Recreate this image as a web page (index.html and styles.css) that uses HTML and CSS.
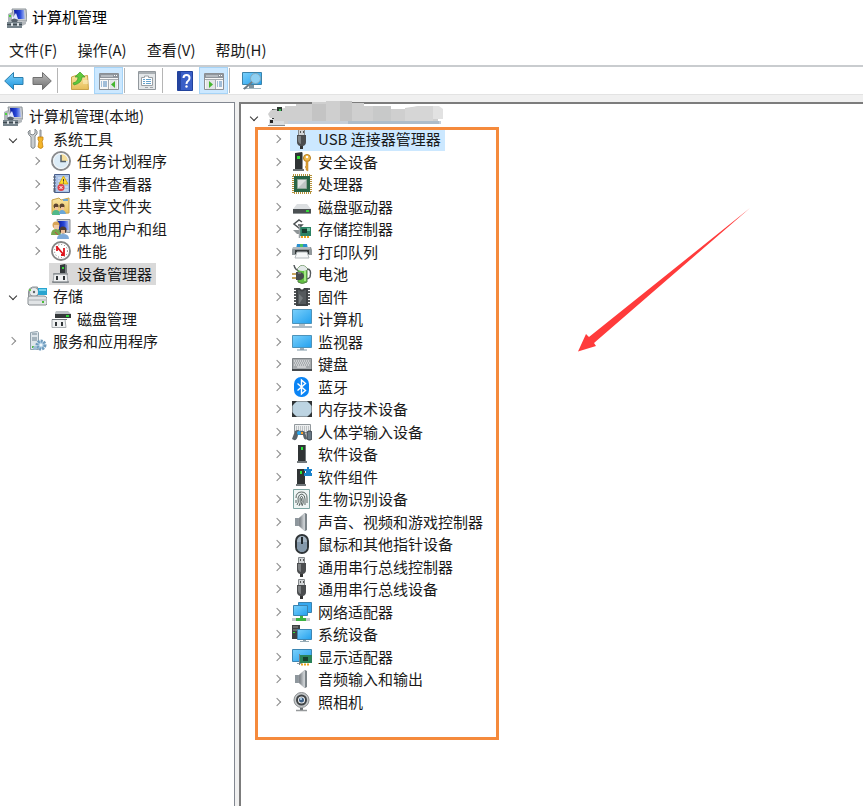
FILE: index.html
```
<!DOCTYPE html>
<html lang="zh-CN">
<head>
    <meta charset="UTF-8">
    <meta name="viewport" content="width=device-width, initial-scale=1">
    <title>计算机管理</title>
    <link rel="stylesheet" href="styles.css">
</head>
<body>
    <!-- Icon sprite, every symbol is drawn on a 20x20 grid -->
    <svg class="sprite" aria-hidden="true">
        <defs>
            <linearGradient id="g-blue" x1="0" y1="0" x2="1" y2="1"><stop offset="0" stop-color="#7ad0fb"/><stop offset="1" stop-color="#22a0ee"/></linearGradient>
            <linearGradient id="g-arrow" x1="0" y1="0" x2="0" y2="1"><stop offset="0" stop-color="#7fd2fa"/><stop offset="1" stop-color="#1a93dd"/></linearGradient>
            <linearGradient id="g-grey" x1="0" y1="0" x2="0" y2="1"><stop offset="0" stop-color="#bdbdbd"/><stop offset="1" stop-color="#707070"/></linearGradient>
            <linearGradient id="g-silver" x1="0" y1="0" x2="1" y2="0"><stop offset="0" stop-color="#70767b"/><stop offset="1" stop-color="#dfe3e6"/></linearGradient>
            <linearGradient id="g-screen" x1="0" y1="0" x2="1" y2="0"><stop offset="0" stop-color="#0a1a9c"/><stop offset=".55" stop-color="#2747d8"/><stop offset="1" stop-color="#a9bcf5"/></linearGradient>
            <linearGradient id="g-folder" x1="0" y1="0" x2="0" y2="1"><stop offset="0" stop-color="#fbe7a4"/><stop offset="1" stop-color="#e6bd58"/></linearGradient>
        </defs>
        <symbol id="i-computer-mgmt" viewBox="0 0 20 20">
            <path d="M5 1h14l1 12H7z" fill="#c9ccd0" stroke="#8d9499"/>
            <path d="M7 2h10l1 9H8z" fill="url(#g-screen)"/>
            <path d="M1 6l4-2v10H1z" fill="#aeb5ba"/><path d="M2 7h2v2H2z" fill="#4bd53b"/>
            <path d="M5 11l4-6 2 6z" fill="#dfe6ff"/>
            <path d="M4 12q3-3 7 0l-1 2H5z" fill="#56606a"/>
            <path d="M0 14h15v6H0z" fill="#76838b"/><path d="M0 16h15v1H0z" fill="#3f4a52"/>
            <path d="M4 15h2v3H4zM10 15h2v3h-2z" fill="#d7dde1"/>
            <path d="M15 14l4-1v3l-4 2z" fill="#b3b8bc"/>
        </symbol>
        <symbol id="i-back" viewBox="0 0 20 20"><path d="M.7 10L9.500 1.500v5H19v7H9.500v5z" fill="url(#g-arrow)" stroke="#2b7fae"/></symbol>
        <symbol id="i-forward" viewBox="0 0 20 20"><path d="M19.300 10L10.500 1.500v5H1v7h9.500v5z" fill="url(#g-grey)" stroke="#707070"/></symbol>
        <symbol id="i-up" viewBox="0 0 20 20">
            <path d="M1.500 6l6-2 1.500 2 8.500-1.500 1 14H1.500z" fill="url(#g-folder)" stroke="#c9a24a"/>
            <path d="M13 10h5M13 12h5" stroke="#fff3c9"/>
            <path d="M3 12Q8 11 8 6H5l5-5 5 5h-3q0 6-8 8z" fill="#5ec93c" stroke="#3d9a28" stroke-width=".7"/>
        </symbol>
        <symbol id="i-tree" viewBox="0 0 20 20">
            <path d="M.5 2.500h19v16H.5z" fill="#f8f8f8" stroke="#8b8f94"/><path d="M1 3h18v4H1z" fill="#8f959c"/>
            <path d="M2 5h12" stroke="#dde1e5"/><path d="M15 4h1v1h-1zM17 4h1v1h-1z" fill="#fff"/>
            <path d="M9.500 8v10M1 8.500h18" stroke="#a6abb0"/>
            <path d="M2 11h1m1 0h4M2 13h1m1 0h4M2 15h1m1 0h4" stroke="#4b83b8"/>
            <path d="M11 9h7v9h-7z" fill="#e3e5e7"/><path d="M12 13.500l4-3.500v7z" fill="#45b62e"/>
        </symbol>
        <symbol id="i-props" viewBox="0 0 20 20">
            <path d="M1.500 .5h17v18h-17z" fill="#e4e7e9" stroke="#92989d"/><path d="M2 1h16v2H2z" fill="#a9afb3"/>
            <path d="M4.500 6.500h3V5h4v1.500h4v8h-11z" fill="#fff" stroke="#9aa0a5"/>
            <path d="M6 8.500h2m1 0h5M6 10.500h2m1 0h5M6 12.500h2m1 0h5" stroke="#65a2cc"/><path d="M8 16.500h3m2 0h3" stroke="#a0a5aa"/>
        </symbol>
        <symbol id="i-help" viewBox="0 0 20 20">
            <path d="M2.500 .5h15v19h-15z" fill="#395fc7" stroke="#21429c"/><path d="M3 1h3v18H3z" fill="#24449f"/>
            <path d="M8.500 7q0-3 3-3t3 3q0 2-1.500 3T11.500 13" fill="none" stroke="#fff" stroke-width="2"/><circle cx="11.500" cy="15.500" r="1.200" fill="#fff"/>
        </symbol>
        <symbol id="i-action" viewBox="0 0 20 20">
            <path d="M.5 2.500h19v16H.5z" fill="#f8f8f8" stroke="#8b8f94"/><path d="M1 3h18v4H1z" fill="#8f959c"/>
            <path d="M2 5h12" stroke="#dde1e5"/><path d="M15 4h1v1h-1zM17 4h1v1h-1z" fill="#fff"/>
            <path d="M2 9h9v9H2z" fill="#e3e5e7"/><path d="M11.500 8v10M1 8.500h18" stroke="#a6abb0"/>
            <path d="M5 10v7l4-3.500z" fill="#45b62e"/>
            <path d="M13 11h1m1 0h3M13 13h1m1 0h3M13 15h1m1 0h3" stroke="#4b83b8"/>
        </symbol>
        <symbol id="i-scan" viewBox="0 0 20 20">
            <path d="M.5 1.500h19v12H.5z" fill="url(#g-blue)" stroke="#3b83aa"/><path d="M7 14h5v3H7z" fill="#7b929e"/><path d="M1 17.500h18" stroke="#a3b7c1"/>
            <circle cx="13.500" cy="7.500" r="5" fill="#8fd0f2" stroke="#86a9bb"/><path d="M10 11l-8 7" stroke="#6c7d87" stroke-width="2"/>
        </symbol>
        <symbol id="i-tools" viewBox="0 0 20 20">
            <path d="M3 1v4l3 1 2-2V0q3 2 2 5L8 7v11q-2 3-4 0V8Q1 6 1 3z" fill="#c9cdd0" stroke="#868c90"/>
            <path d="M13 1h1v7h-1z" stroke="#8b8f92" fill="#dde0e2"/>
            <path d="M11 8h5v3l-1 1 1 6q-2 3-5 0l1-6-1-1z" fill="#f4b52a" stroke="#c4820f" stroke-width=".8"/>
        </symbol>
        <symbol id="i-clock" viewBox="0 0 20 20">
            <circle cx="10" cy="10" r="9" fill="#dcecf7" stroke="#8b8c8e" stroke-width="2"/><path d="M10 10V3a7 7 0 0 1 7 7z" fill="#f6df9d"/>
            <circle cx="10" cy="10" r="7.500" fill="none" stroke="#f7f7f7"/><path d="M10 4v6.500h5" fill="none" stroke="#55626c" stroke-width="1.500"/>
        </symbol>
        <symbol id="i-event" viewBox="0 0 20 20">
            <path d="M3.500 .5h15v18h-15z" fill="#a9c1e6" stroke="#4a5f8c"/><path d="M7 4h10M7 7h10M7 10h10M7 13h10M7 16h10" stroke="#e1ebf8"/>
            <path d="M2 3h3M2 6h3M2 9h3M2 12h3M2 15h3M2 17h3" stroke="#59606b"/>
            <path d="M12.500 2l4.500 8H8z" fill="#ffd92e" stroke="#cda20b" stroke-width=".8"/><path d="M12.500 5v2.500M12.500 8.500v1" stroke="#333"/>
            <circle cx="10" cy="13.500" r="3.500" fill="#e0424a"/><path d="M8.500 12l3 3m0-3l-3 3" stroke="#fff"/>
        </symbol>
        <symbol id="i-share" viewBox="0 0 20 20">
            <path d="M1 4l7-2 2 2 8-2v15l-17 1z" fill="url(#g-folder)" stroke="#c9a24a"/><path d="M12 4h5" stroke="#6fa7cf" stroke-width="2"/>
            <circle cx="5" cy="10" r="2.500" fill="#5b4431"/><circle cx="11" cy="10" r="2.500" fill="#5b4431"/>
            <path d="M4 11h3v3H4zM10 11h3v3h-3z" fill="#f0c29c"/><path d="M1 19q0-5 4-5t4 5z" fill="#51b98a"/><path d="M8 18q0-4 3-4t4 4z" fill="#6aa7d8"/>
        </symbol>
        <symbol id="i-users" viewBox="0 0 20 20">
            <path d="M6 .5h13v13l-11-1z" fill="#c8cbd0" stroke="#8b9095"/><path d="M7 2h10l1 9H8z" fill="url(#g-screen)"/>
            <circle cx="5" cy="6" r="3.500" fill="#d8a557"/><path d="M3 6h5v4H3z" fill="#f0c9a2"/><path d="M0 16q0-6 5-6t5 6z" fill="#76a84f"/>
            <circle cx="12" cy="11" r="3.500" fill="#4d3c30"/><path d="M10 11h4v3h-4z" fill="#eebf98"/><path d="M6 20q0-5 6-5t6 5z" fill="#7eaad9"/><path d="M4 13l3 3" stroke="#c44"/>
        </symbol>
        <symbol id="i-perf" viewBox="0 0 20 20">
            <circle cx="10" cy="10" r="9" fill="#fff" stroke="#858585" stroke-width="1.800"/><circle cx="10" cy="10" r="6.500" fill="none" stroke="#777" stroke-dasharray="1 2"/>
            <path d="M6 6l7 8M6 5v5M13 7v7H10" fill="none" stroke="#e0141c" stroke-width="1.800"/>
        </symbol>
        <symbol id="i-devmgr" viewBox="0 0 20 20">
            <path d="M9 1l5-1v10H9z" fill="#33383b"/><path d="M14 0l2 1v9h-2z" fill="#777d80"/><path d="M11 3h2v2h-2z" fill="#35d43a"/>
            <path d="M3 9.500h13l1 9H2z" fill="#eef0f1" stroke="#a5aaae"/><path d="M2 10h15" stroke="#72797d"/><path d="M5 12h2v4H5zM12 12h2v4h-2z" fill="#2d3235"/><path d="M1 18h17" stroke="#62686c"/>
        </symbol>
        <symbol id="i-storage" viewBox="0 0 20 20">
            <path d="M1.500 6q0-4 4-5h5v10l-9 2z" fill="#c5c9cb" stroke="#8c9296"/><circle cx="7" cy="6" r="4.500" fill="#e8ecee" stroke="#9aa0a4"/><circle cx="7" cy="6" r="1.200" fill="#5d656a"/><path d="M2 3h2v2H2z" fill="#68cc47"/>
            <path d="M11 2h9v7h-9z" fill="#28a4cf"/><path d="M12 3h7v2h-7z" fill="#73d2ee"/>
            <path d="M1 12q0-2 2-2h14q2 0 3 2v6l-1 1H2l-1-1z" fill="#e1e4e6" stroke="#868c90"/><path d="M2 14h17" stroke="#a9aeb2"/><path d="M15 15h2v2h-2z" fill="#49bd38"/>
        </symbol>
        <symbol id="i-diskmgmt" viewBox="0 0 20 20">
            <path d="M5 2h12l3 3v3H4V4z" fill="#bcc1c4"/><path d="M4 5h16v4H4z" fill="#35393b"/><path d="M15 6h3v2h-3z" fill="#2ed43a"/>
            <path d="M1 10.500h13l1 8H1z" fill="#eff1f2" stroke="#a8adb0"/><path d="M1 10h15v1H1z" fill="#70777b"/><path d="M4 13h2v4H4zM10 13h2v4h-2z" fill="#303538"/>
        </symbol>
        <symbol id="i-services" viewBox="0 0 20 20">
            <path d="M3.500 1.500l7-1 1 1v17h-8z" fill="#dde5ea" stroke="#91a2ad"/><path d="M5 3h5M5 7h5M5 9h5" stroke="#6c8290"/><path d="M5 15h2v2H5z" fill="#54bb42"/>
            <circle cx="14" cy="14" r="4" fill="#aecde4" stroke="#6e9bbd" stroke-width="3" stroke-dasharray="2 1"/><circle cx="14" cy="14" r="1.500" fill="#eef6fb"/>
            <circle cx="8" cy="17" r="2" fill="#9bbdd6"/>
        </symbol>
        <symbol id="i-pc" viewBox="0 0 20 20">
            <path d="M4 2h7v11H4z" fill="#34393a"/><path d="M8 3h2v2H8z" fill="#30cc3a"/><path d="M1 12h16v7H1z" fill="#d9dcde"/><path d="M2 13h3v3H2z" fill="#222"/><path d="M0 18.500h17" stroke="#868b8e"/>
        </symbol>
        <symbol id="i-usb" viewBox="0 0 20 20">
            <path d="M6.500 .5h6v6h-6z" fill="#d2d5d7" stroke="#85898c"/><path d="M8 2h1v2H8zM11 2h1v2h-1z" fill="#555"/>
            <path d="M5 6h9v7q0 3-3 4H8q-3-1-3-4z" fill="#4b4d4f"/><path d="M6 7h3v8Q6 14 6 11z" fill="#7d8082"/><path d="M8 17h3v3H8z" fill="#333"/>
        </symbol>
        <symbol id="i-security" viewBox="0 0 20 20">
            <path d="M3 1l7-1v17H3z" fill="#2f3334"/><path d="M10 0l1 1v16h-1z" fill="#8d9293"/><path d="M5 4h3v3H5z" fill="#2fdf33"/><path d="M1 17h11v2H1z" fill="#6f7475"/>
            <circle cx="15" cy="6" r="3.500" fill="#f0b94c" stroke="#b57c1c"/><circle cx="15" cy="5" r="1.200" fill="#fff"/><path d="M14 9h2v10l-2-1v-2l-1-1 1-1z" fill="#dda034" stroke="#b57c1c" stroke-width=".5"/>
        </symbol>
        <symbol id="i-cpu" viewBox="0 0 20 20">
            <path d="M1 1h18v18H1z" fill="none" stroke="#b5913a" stroke-width="2" stroke-dasharray="1 1"/><path d="M2 2h16v16H2z" fill="#286445"/>
            <path d="M5.500 5.500h9v9h-9z" fill="#dfe2e2" stroke="#8fa799"/><path d="M6 14l8-8v8z" fill="#bfc5c5"/>
        </symbol>
        <symbol id="i-disk" viewBox="0 0 20 20">
            <path d="M5 7h10l4 5H1z" fill="#dcdfe1"/><path d="M1 12h18v5H1z" fill="#4b5052"/><path d="M1 16.500h18" stroke="#8e9395"/><path d="M14 13h3v2h-3z" fill="#34db39"/>
        </symbol>
        <symbol id="i-storagectl" viewBox="0 0 20 20">
            <path d="M10 3L7 1 2 5l5 4 3-3H6" fill="none" stroke="#4c5153" stroke-width="1.500"/>
            <path d="M1 11h6v4H5z" fill="#8f9597"/><path d="M7 8h12v9H7z" fill="#2c8365"/><path d="M7.500 7v12" stroke="#9da3a5" stroke-width="1.500"/>
            <path d="M10 10h5v4h-5z" fill="#173d31"/><path d="M15 9h3v3h-3z" fill="#71c6a2"/><path d="M9 18h8" stroke="#e9a521" stroke-width="2" stroke-dasharray="2 1"/>
        </symbol>
        <symbol id="i-printer" viewBox="0 0 20 20">
            <path d="M5 2h10l1 5H4z" fill="#288fce"/><path d="M8 2h3v4H8z" fill="#49c465"/><path d="M1 5h18l1 3v5H0V8z" fill="#91989b"/><path d="M1 6h17" stroke="#d7dcdf"/>
            <path d="M3 8h14v4H3z" fill="#34393b"/><path d="M5 10h10l2 6H3z" fill="#f6f8f9" stroke="#b1b7ba"/>
        </symbol>
        <symbol id="i-battery" viewBox="0 0 20 20">
            <path d="M2 1q1 6 7 6M15 5q5 0 3 8-1 2-4 2" fill="none" stroke="#53595b" stroke-width="1.500"/>
            <path d="M6 4q4-5 9 0v14q-5 3-9 0z" fill="#61bf42" stroke="#56804b"/><path d="M6 4q4-5 9 0v2q-4 2-9 0z" fill="#e2e8e8"/><path d="M13 7v10" stroke="#a3e984" stroke-width="2"/>
            <path d="M4 8h4q4 1 4 4t-4 4H4z" fill="#464b4c"/><path d="M0 10h4M0 14h4" stroke="#b8892b" stroke-width="1.500"/><path d="M6 9h3" stroke="#999"/>
        </symbol>
        <symbol id="i-firmware" viewBox="0 0 20 20">
            <path d="M3.500 1v18M16.500 1v18" stroke="#565a5c" stroke-width="3" stroke-dasharray="2 1"/><path d="M4 1h4q2 3 4 0h4v18H4z" fill="#3e4244"/><path d="M6 3h1q3 3 6 0h1v14H6z" fill="#54595c"/><path d="M7 17V7l4 4z" fill="#747a7c"/>
        </symbol>
        <symbol id="i-computer" viewBox="0 0 20 20">
            <path d="M.5 .5h19v14H.5z" fill="url(#g-blue)" stroke="#4d93ba"/><path d="M7 15h6v2H7z" fill="#b3c0c8"/><path d="M0 18h20" stroke="#91a5b2" stroke-width="1.500"/>
        </symbol>
        <symbol id="i-monitor" viewBox="0 0 20 20">
            <path d="M.5 3.500h19v12H.5z" fill="url(#g-blue)" stroke="#4d93ba"/><path d="M8 16h4v2H8z" fill="#9cadb7"/><path d="M5 18h10" stroke="#8099a8"/>
        </symbol>
        <symbol id="i-keyboard" viewBox="0 0 20 20">
            <path d="M.5 4.500h19v11H.5z" fill="#a7abae" stroke="#7e8386"/><path d="M2 7h16M3 9h15M2 11h16" stroke="#f3f5f6" stroke-dasharray="1 1"/><path d="M5 13h9" stroke="#eee"/><path d="M0 15h20v2H0z" fill="#45494c"/>
        </symbol>
        <symbol id="i-bluetooth" viewBox="0 0 20 20">
            <rect x="2" width="15" height="20" rx="7" fill="#0a84f5"/><path d="M5.500 6.500l8 7-4 3.500V3l4 3.500-8 7" fill="none" stroke="#fff" stroke-width="1.400"/>
        </symbol>
        <symbol id="i-memory" viewBox="0 0 20 20">
            <rect x=".5" y="2.500" width="19" height="15" rx="1" fill="#b9d1df" stroke="#8b969d"/><path d="M0 7V2h5zM15 2h5v5zM0 13v5h5zM15 18h5v-5z" fill="#303436"/><path d="M3 4h14l1 2v8l-1 2H3l-1-2V6z" fill="#bdd4e2"/>
        </symbol>
        <symbol id="i-hid" viewBox="0 0 20 20">
            <path d="M2.500 2.500h16v8h-16z" fill="#eceeef" stroke="#92999d"/><path d="M4 5h13M4 7h13M4 9h13" stroke="#8f9699" stroke-dasharray="1 1"/>
            <path d="M3 9q3-2 5 0 3-1 5 1l2 7q-3 2-4-4H6q-1 6-4 5l-2-1z" fill="#59636a"/><circle cx="7" cy="11" r="2" fill="#2ba6ec"/><path d="M9 11h2" stroke="#ff9f27" stroke-width="2"/>
            <rect x="15" y="9" width="5" height="9" rx="2" fill="#677783" stroke="#394148"/>
        </symbol>
        <symbol id="i-software" viewBox="0 0 20 20">
            <path d="M6 1h8v16H6z" fill="#303435"/><path d="M13 1h1v16h-1z" fill="#70777a"/><path d="M9 3h2v3H9z" fill="#27e53a"/><path d="M5 17h10v2H5z" fill="#72787b"/>
        </symbol>
        <symbol id="i-component" viewBox="0 0 20 20">
            <path d="M5 2h8v16H5z" fill="#303435"/><path d="M8 4h2v3H8z" fill="#27e53a"/><path d="M4 17h10v2H4z" fill="#72787b"/>
            <path d="M12 2h3V0h2v2h3v2h-1v2h1v3h-8V6h2V4h-2z" fill="#1982cb"/>
        </symbol>
        <symbol id="i-bio" viewBox="0 0 20 20">
            <path d="M1.500 .5h16v19h-16z" fill="#eef5f4" stroke="#7da5a2"/>
            <g fill="none" stroke="#596361"><path d="M4 9q0-6 5.500-6T15 9v5M5 16q2-2 1-7 1-4 4-4 3 1 3 5v6M7 17q2-3 1-8 2-4 3 1 1 4-1 7M9 9q2 4 0 7M4 11v3"/></g>
        </symbol>
        <symbol id="i-speaker" viewBox="0 0 20 20">
            <path d="M3 6h4v8H3z" fill="#8e979d"/><path d="M7 6l6-5v18l-6-5z" fill="url(#g-silver)" stroke="#a5aaae" stroke-width=".5"/><path d="M13 1l2 1v16l-2 1z" fill="#7b8388"/>
        </symbol>
        <symbol id="i-mouse" viewBox="0 0 20 20">
            <rect x="4" y="1" width="12" height="18" rx="6" fill="#a4b4c2" stroke="#303538" stroke-width="2"/><path d="M5 8v5q1 5 5 5t5-5V8z" fill="#8498aa"/><path d="M10 3v7" stroke="#22282c" stroke-width="2"/>
        </symbol>
        <symbol id="i-network" viewBox="0 0 20 20">
            <path d="M6.500 .5h13v10h-13z" fill="#35a8f0" stroke="#3a83b0"/><path d="M1.500 3.500h14v10h-14z" fill="url(#g-blue)" stroke="#3a83b0"/>
            <path d="M8 14h3v2H8z" fill="#46b33d"/><path d="M0 17.500h18" stroke="#c5cacc" stroke-width="3"/><path d="M4 17.500h10" stroke="#3cb343" stroke-width="3"/>
        </symbol>
        <symbol id="i-system" viewBox="0 0 20 20">
            <path d="M0 1h8v14H0z" fill="#3e4244"/><path d="M1 3h5M1 6h5" stroke="#999"/><path d="M1 8h2v1H1z" fill="#31df3b"/>
            <path d="M5.500 5.500h14v10h-14z" fill="url(#g-blue)" stroke="#3d86b3"/><path d="M11 16h3v1h-3z" fill="#8ba0ac"/><path d="M8 17.500h9" stroke="#98abb5"/>
        </symbol>
        <symbol id="i-display" viewBox="0 0 20 20">
            <path d="M.5 2.500h19v12H.5z" fill="url(#g-blue)" stroke="#3d86b3"/><path d="M5 16.500h5" stroke="#8ba0ac"/><path d="M7.500 7v11" stroke="#7b8183"/>
            <path d="M8 8h12v8H8z" fill="#2b8358"/><path d="M11 10h5v4h-5z" fill="#163f2d"/><path d="M9 17.500h8" stroke="#e9a521" stroke-width="2" stroke-dasharray="2 1"/>
        </symbol>
        <symbol id="i-camera" viewBox="0 0 20 20">
            <circle cx="9.500" cy="8" r="7.500" fill="#c5c8ca" stroke="#8a8e90"/><circle cx="9.500" cy="8" r="4.500" fill="#f0f2f3" stroke="#3f4345" stroke-width="2"/><circle cx="9.500" cy="8" r="2.500" fill="#3c5f85"/><circle cx="9" cy="7" r="1" fill="#c6e3fa"/>
            <path d="M8 16h3v2H8z" fill="#686d70"/><path d="M4 18.500h11" stroke="#96999b" stroke-width="1.500"/>
        </symbol>
    </svg>

    <header class="title-bar">
        <svg class="icon"><use href="#i-computer-mgmt"/></svg>
        <span>计算机管理</span>
    </header>

    <nav class="menu">
        <button>文件(F)</button>
        <button>操作(A)</button>
        <button>查看(V)</button>
        <button>帮助(H)</button>
    </nav>

    <div class="toolbar">
        <button aria-label="后退"><svg class="icon"><use href="#i-back"/></svg></button>
        <button aria-label="前进"><svg class="icon"><use href="#i-forward"/></svg></button>
        <span class="separator"></span>
        <button aria-label="上移"><svg class="icon"><use href="#i-up"/></svg></button>
        <button class="active" aria-label="显示/隐藏控制台树"><svg class="icon"><use href="#i-tree"/></svg></button>
        <span class="separator"></span>
        <button aria-label="属性"><svg class="icon"><use href="#i-props"/></svg></button>
        <span class="separator"></span>
        <button aria-label="帮助"><svg class="icon"><use href="#i-help"/></svg></button>
        <button class="active" aria-label="显示/隐藏操作窗格"><svg class="icon"><use href="#i-action"/></svg></button>
        <span class="separator"></span>
        <button aria-label="扫描检测硬件改动"><svg class="icon"><use href="#i-scan"/></svg></button>
    </div>

    <main class="panes">
        <aside class="console-pane">
            <div class="row"><span class="node"><svg class="icon"><use href="#i-computer-mgmt"/></svg>计算机管理(本地)</span></div>
            <ul class="tree">
                <li>
                    <div class="row"><button class="expander open" aria-label="折叠"></button><span class="node"><svg class="icon"><use href="#i-tools"/></svg>系统工具</span></div>
                    <ul class="tree nested">
                        <li class="row"><button class="expander" aria-label="展开"></button><span class="node"><svg class="icon"><use href="#i-clock"/></svg>任务计划程序</span></li>
                        <li class="row"><button class="expander" aria-label="展开"></button><span class="node"><svg class="icon"><use href="#i-event"/></svg>事件查看器</span></li>
                        <li class="row"><button class="expander" aria-label="展开"></button><span class="node"><svg class="icon"><use href="#i-share"/></svg>共享文件夹</span></li>
                        <li class="row"><button class="expander" aria-label="展开"></button><span class="node"><svg class="icon"><use href="#i-users"/></svg>本地用户和组</span></li>
                        <li class="row"><button class="expander" aria-label="展开"></button><span class="node"><svg class="icon"><use href="#i-perf"/></svg>性能</span></li>
                        <li class="row leaf"><span class="node current"><svg class="icon"><use href="#i-devmgr"/></svg>设备管理器</span></li>
                    </ul>
                </li>
                <li>
                    <div class="row"><button class="expander open" aria-label="折叠"></button><span class="node"><svg class="icon"><use href="#i-storage"/></svg>存储</span></div>
                    <ul class="tree nested">
                        <li class="row leaf"><span class="node"><svg class="icon"><use href="#i-diskmgmt"/></svg>磁盘管理</span></li>
                    </ul>
                </li>
                <li class="row"><button class="expander" aria-label="展开"></button><span class="node"><svg class="icon"><use href="#i-services"/></svg>服务和应用程序</span></li>
            </ul>
        </aside>

        <section class="device-pane">
            <div class="row root"><button class="expander open" aria-label="折叠"></button><span class="node"><svg class="icon"><use href="#i-pc"/></svg></span>
                <!-- blurred-out computer name -->
                <svg class="mask" viewBox="0 0 180 24">
                    <path d="M0 13l3-4 14-2V5h11V3h16V1h14V0h26v2h12v3h17v3h24V7l14-2h17l4 3v3h3v7h-5v5H16v-3H6v-3H2z" fill="#cfcfcf"/>
                    <path d="M44 3h14v17H44zM72 0h12v20H72z" fill="#c4c4c4"/><path d="M105 5h18v15h-18z" fill="#c8c9c9"/>
                    <path d="M137 8l14-3h14v15h-28z" fill="#d6d6d6"/><path d="M165 5h6l4 3v10h-10z" fill="#e2e2e2"/>
                    <path d="M20 20h153v3H20z" fill="#c5cfda"/><path d="M80 20h91v3H80z" fill="#aebdca"/>
                    <path d="M9 6h5v4H9z" fill="#2c3931"/><path d="M11 8h2v2h-2z" fill="#38c253"/>
                </svg>
            </div>
            <ul class="tree nested devices">
                <li class="row"><button class="expander" aria-label="展开"></button><span class="node selected"><svg class="icon"><use href="#i-usb"/></svg>USB 连接器管理器</span></li>
                <li class="row"><button class="expander" aria-label="展开"></button><span class="node"><svg class="icon"><use href="#i-security"/></svg>安全设备</span></li>
                <li class="row"><button class="expander" aria-label="展开"></button><span class="node"><svg class="icon"><use href="#i-cpu"/></svg>处理器</span></li>
                <li class="row"><button class="expander" aria-label="展开"></button><span class="node"><svg class="icon"><use href="#i-disk"/></svg>磁盘驱动器</span></li>
                <li class="row"><button class="expander" aria-label="展开"></button><span class="node"><svg class="icon"><use href="#i-storagectl"/></svg>存储控制器</span></li>
                <li class="row"><button class="expander" aria-label="展开"></button><span class="node"><svg class="icon"><use href="#i-printer"/></svg>打印队列</span></li>
                <li class="row"><button class="expander" aria-label="展开"></button><span class="node"><svg class="icon"><use href="#i-battery"/></svg>电池</span></li>
                <li class="row"><button class="expander" aria-label="展开"></button><span class="node"><svg class="icon"><use href="#i-firmware"/></svg>固件</span></li>
                <li class="row"><button class="expander" aria-label="展开"></button><span class="node"><svg class="icon"><use href="#i-computer"/></svg>计算机</span></li>
                <li class="row"><button class="expander" aria-label="展开"></button><span class="node"><svg class="icon"><use href="#i-monitor"/></svg>监视器</span></li>
                <li class="row"><button class="expander" aria-label="展开"></button><span class="node"><svg class="icon"><use href="#i-keyboard"/></svg>键盘</span></li>
                <li class="row"><button class="expander" aria-label="展开"></button><span class="node"><svg class="icon"><use href="#i-bluetooth"/></svg>蓝牙</span></li>
                <li class="row"><button class="expander" aria-label="展开"></button><span class="node"><svg class="icon"><use href="#i-memory"/></svg>内存技术设备</span></li>
                <li class="row"><button class="expander" aria-label="展开"></button><span class="node"><svg class="icon"><use href="#i-hid"/></svg>人体学输入设备</span></li>
                <li class="row"><button class="expander" aria-label="展开"></button><span class="node"><svg class="icon"><use href="#i-software"/></svg>软件设备</span></li>
                <li class="row"><button class="expander" aria-label="展开"></button><span class="node"><svg class="icon"><use href="#i-component"/></svg>软件组件</span></li>
                <li class="row"><button class="expander" aria-label="展开"></button><span class="node"><svg class="icon"><use href="#i-bio"/></svg>生物识别设备</span></li>
                <li class="row"><button class="expander" aria-label="展开"></button><span class="node"><svg class="icon"><use href="#i-speaker"/></svg>声音、视频和游戏控制器</span></li>
                <li class="row"><button class="expander" aria-label="展开"></button><span class="node"><svg class="icon"><use href="#i-mouse"/></svg>鼠标和其他指针设备</span></li>
                <li class="row"><button class="expander" aria-label="展开"></button><span class="node"><svg class="icon"><use href="#i-usb"/></svg>通用串行总线控制器</span></li>
                <li class="row"><button class="expander" aria-label="展开"></button><span class="node"><svg class="icon"><use href="#i-usb"/></svg>通用串行总线设备</span></li>
                <li class="row"><button class="expander" aria-label="展开"></button><span class="node"><svg class="icon"><use href="#i-network"/></svg>网络适配器</span></li>
                <li class="row"><button class="expander" aria-label="展开"></button><span class="node"><svg class="icon"><use href="#i-system"/></svg>系统设备</span></li>
                <li class="row"><button class="expander" aria-label="展开"></button><span class="node"><svg class="icon"><use href="#i-display"/></svg>显示适配器</span></li>
                <li class="row"><button class="expander" aria-label="展开"></button><span class="node"><svg class="icon"><use href="#i-speaker"/></svg>音频输入和输出</span></li>
                <li class="row"><button class="expander" aria-label="展开"></button><span class="node"><svg class="icon"><use href="#i-camera"/></svg>照相机</span></li>
            </ul>

            <!-- Annotations drawn over the device list -->
            <div class="highlight-box"></div>
            <svg class="arrow" viewBox="0 0 172 144"><path d="M172 0L16 135l2 3L0 143.500 8 126l3 3z" fill="#ff3b3b"/></svg>
        </section>
    </main>
</body>
</html>
```

FILE: styles.css
```
* {
    box-sizing: border-box;
}
body {
    margin: 0;
    min-height: 100vh;
    display: flex;
    flex-direction: column;
    background-color: #fff;
    color: #1a1a1a;
    font-family: "Noto Sans CJK SC", sans-serif;
    font-size: 15px;
    line-height: 1.5;
}
button {
    padding: 0;
    border: none;
    background: none;
    color: inherit;
    font: inherit;
}
.sprite {
    position: absolute;
    width: 0;
    height: 0;
}
.icon {
    display: block;
    flex: none;
    width: 20px;
    height: 20px;
}

/* Title, menu and toolbar */
.title-bar {
    display: flex;
    align-items: center;
    gap: 5px;
    height: 35px;
    padding-left: 7px;
    color: #000;
}
.menu {
    display: flex;
    align-items: center;
    gap: 20px;
    height: 30px;
    padding-left: 9px;
}
.toolbar {
    display: flex;
    align-items: center;
    height: 30px;
    border-top: 2px solid #c9cccf;
    border-bottom: 1px solid #e3e3e3;
}
.toolbar button {
    display: flex;
    align-items: center;
    justify-content: center;
    width: 28px;
    height: 27px;
}
.toolbar .active {
    width: 29px;
    background-color: #cce8ff;
    border: 1px solid #a6d4f7;
}
.toolbar .separator {
    width: 1px;
    height: 25px;
    margin: 0 8px 0 1px;
    background-color: #b5b5b5;
}

/* Panes */
.panes {
    flex: 1;
    display: grid;
    grid-template-columns: 235px 1fr;
    gap: 4px;
    padding-top: 7px;
    background-color: #f0f0f0;
}
.console-pane {
    padding-top: 2px;
    background-color: #fff;
    border-top: 1px solid #828790;
    border-right: 1px solid #828790;
}
.console-pane > .row {
    padding-left: 1px;
}
.device-pane {
    position: relative;
    padding-top: 1px;
    background-color: #fff;
    border-top: 2px solid #7c7c7c;
    border-left: 2px solid #7c7c7c;
}

/* Trees */
.tree {
    margin: 0;
    padding: 0 0 0 3px;
    list-style: none;
}
.nested {
    padding-left: 24px;
}
.row {
    display: flex;
    gap: 2px;
}
.leaf {
    padding-left: 22px;
}
.root {
    position: relative;
    height: 23px;
    padding-left: 3px;
}
.devices {
    padding-left: 27px;
}
.node {
    display: flex;
    align-items: center;
    gap: 6px;
    padding: 0 4px 0 2px;
    white-space: nowrap;
}
.current {
    background-color: #d9d9d9;
}
.selected {
    background-color: #cce8ff;
}
.expander {
    display: flex;
    align-items: center;
    justify-content: center;
    width: 20px;
}
.expander::before {
    content: "";
    width: 5px;
    height: 5px;
    margin-right: 2px;
    border-top: 1px solid #8a8a8a;
    border-right: 1px solid #8a8a8a;
    transform: rotate(45deg);
}
.open::before {
    margin: 0;
    border-color: #333;
    transform: rotate(135deg);
}

/* Annotations */
.mask {
    position: absolute;
    top: -4px;
    left: 27px;
    width: 180px;
    height: 24px;
}
.highlight-box {
    position: absolute;
    top: 23px;
    left: 14px;
    width: 244px;
    height: 613px;
    border: 3px solid #f58a3c;
}
.arrow {
    position: absolute;
    top: 104px;
    left: 337px;
    width: 172px;
    height: 144px;
}
```
